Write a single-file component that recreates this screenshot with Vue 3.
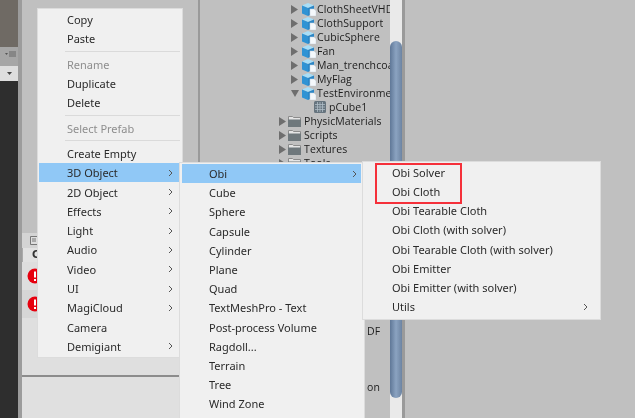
<script setup>
const menu1 = [
  { t: 'Copy' }, { t: 'Paste' }, { sep: true },
  { t: 'Rename', off: true }, { t: 'Duplicate' }, { t: 'Delete' }, { sep: true },
  { t: 'Select Prefab', off: true }, { sep: true },
  { t: 'Create Empty' }, { t: '3D Object', sub: true, on: true }, { t: '2D Object', sub: true },
  { t: 'Effects', sub: true }, { t: 'Light', sub: true }, { t: 'Audio', sub: true },
  { t: 'Video', sub: true }, { t: 'UI', sub: true }, { t: 'MagiCloud', sub: true },
  { t: 'Camera' }, { t: 'Demigiant', sub: true }
]
const menu2 = [
  { t: 'Obi', sub: true, on: true }, { t: 'Cube' }, { t: 'Sphere' }, { t: 'Capsule' }, { t: 'Cylinder' },
  { t: 'Plane' }, { t: 'Quad' }, { t: 'TextMeshPro - Text' }, { t: 'Post-process Volume' },
  { t: 'Ragdoll...' }, { t: 'Terrain' }, { t: 'Tree' }, { t: 'Wind Zone' }
]
const menu3 = [
  { t: 'Obi Solver' }, { t: 'Obi Cloth' }, { t: 'Obi Tearable Cloth' }, { t: 'Obi Cloth (with solver)' },
  { t: 'Obi Tearable Cloth (with solver)' }, { t: 'Obi Emitter' }, { t: 'Obi Emitter (with solver)' },
  { t: 'Utils', sub: true }
]
const models = ['ClothSheetVHDF', 'ClothSupport', 'CubicSphere', 'Fan', 'Man_trenchcoat', 'MyFlag']
const folders = ['PhysicMaterials', 'Scripts', 'Textures', 'Tools']
</script>

<template>
  <div class="root">
    <div class="dock">
      <div class="scene"></div>
      <div class="tools">
        <svg width="12" height="7" viewBox="0 0 12 7"><path d="M0 2h3L1.500 4z" fill="#555"/><path d="M4 1h7M4 3h7M4 5h7" stroke="#666" stroke-width="1"/></svg>
      </div>
      <div class="drop">
        <svg width="5" height="4" viewBox="0 0 5 4"><path d="M0 0h5L2.500 3z" fill="#444"/></svg>
      </div>
      <div class="dark"></div>
    </div>
    <div class="edge"></div>
    <div class="mid">
      <div class="midtop"></div>
      <div class="console">
        <div class="tab">
          <svg width="8" height="9" viewBox="0 0 8 9"><path d="M.5.5h7v8h-7zM2 3h4M2 5h4" fill="#ddd" stroke="#777"/></svg>
        </div>
        <div class="bar">Clear</div>
        <div class="log">
          <svg width="16" height="16" viewBox="0 0 16 16"><circle cx="8" cy="8" r="7.500" fill="#e6000f"/><path d="M8 3.500v6M8 11v2" stroke="#fff" stroke-width="2"/></svg>
        </div>
        <div class="log alt">
          <svg width="16" height="16" viewBox="0 0 16 16"><circle cx="8" cy="8" r="7.500" fill="#e6000f"/><path d="M8 3.500v6M8 11v2" stroke="#fff" stroke-width="2"/></svg>
        </div>
        <div class="rest"></div>
        <div class="lower"></div>
      </div>
    </div>
    <div class="divider"></div>
    <div class="tree">
      <div v-for="m in models" :key="m" class="row model">
        <svg class="arrow" width="7" height="9" viewBox="0 0 7 9"><path d="M0 0l7 4.500L0 9z"/></svg>
        <svg class="ico" width="14" height="14" viewBox="0 0 14 14"><path d="M0 3.500L6 1l6 2.500-6 2.500z" fill="#a8def7"/><path d="M0 3.500l6 2.500v8l-6-2.500z" fill="#2f93d4"/><path d="M12 3.500L6 6v8l2-1V7.500h4z" fill="#2b86c6"/><path d="M8 7h4l2 2v5H8z" fill="#f4f8fb" stroke="#c4d3dd" stroke-width=".5"/></svg>
        <span>{{ m }}</span>
      </div>
      <div class="row model">
        <svg class="arrow" width="8" height="7" viewBox="0 0 8 7"><path d="M0 0h8L4 7z"/></svg>
        <svg class="ico" width="14" height="14" viewBox="0 0 14 14"><path d="M0 3.500L6 1l6 2.500-6 2.500z" fill="#a8def7"/><path d="M0 3.500l6 2.500v8l-6-2.500z" fill="#2f93d4"/><path d="M12 3.500L6 6v8l2-1V7.500h4z" fill="#2b86c6"/><path d="M8 7h4l2 2v5H8z" fill="#f4f8fb" stroke="#c4d3dd" stroke-width=".5"/></svg>
        <span>TestEnvironment</span>
      </div>
      <div class="row mesh">
        <svg class="ico" width="12" height="12" viewBox="0 0 12 12"><rect width="12" height="12" rx="1.500" fill="#66747e"/><path d="M3.500 1v10M6 1v10M8.500 1v10M1 3.500h10M1 6h10M1 8.500h10" stroke="#aebcc6" stroke-width=".8"/></svg>
        <span>pCube1</span>
      </div>
      <div v-for="f in folders" :key="f" class="row folder">
        <svg class="arrow" width="7" height="9" viewBox="0 0 7 9"><path d="M0 0l7 4.500L0 9z"/></svg>
        <svg class="ico" width="13" height="12" viewBox="0 0 13 12"><path d="M.5 1.500h4l1 1h7v9H.5z" fill="#e4e4e4" stroke="#8c8c8c"/><path d="M0 4.500h13V12H0z" fill="#6f787c"/></svg>
        <span>{{ f }}</span>
      </div>
      <div class="row far first"><span>DF</span></div>
      <div class="row far second"><span>on</span></div>
    </div>
    <div class="scroll"><div class="thumb"></div></div>
    <div class="strip"></div>
    <div class="right"></div>

    <div class="menu m1">
      <template v-for="(i, n) in menu1" :key="n">
        <div v-if="i.sep" class="sep"></div>
        <div v-else class="item" :class="{ off: i.off, on: i.on }">
          <span>{{ i.t }}</span>
          <svg v-if="i.sub" width="5" height="8" viewBox="0 0 5 8"><path d="M1 1l3 3-3 3" fill="none" stroke="#555" stroke-width="1"/></svg>
        </div>
      </template>
    </div>
    <div class="menu m2">
      <div v-for="i in menu2" :key="i.t" class="item" :class="{ on: i.on }">
        <span>{{ i.t }}</span>
        <svg v-if="i.sub" width="5" height="8" viewBox="0 0 5 8"><path d="M1 1l3 3-3 3" fill="none" stroke="#555" stroke-width="1"/></svg>
      </div>
    </div>
    <div class="menu m3">
      <div v-for="i in menu3" :key="i.t" class="item">
        <span>{{ i.t }}</span>
        <svg v-if="i.sub" width="5" height="8" viewBox="0 0 5 8"><path d="M1 1l3 3-3 3" fill="none" stroke="#555" stroke-width="1"/></svg>
      </div>
    </div>
    <div class="mark"></div>
  </div>
</template>

<style scoped>
.root {
  position: relative;
  display: flex;
  width: 635px;
  height: 418px;
  overflow: hidden;
  background: #c0c0c0;
  font-family: "Noto Sans", sans-serif;
  filter: blur(0.4px);
}
.dock { width: 18px; display: flex; flex-direction: column; }
.scene { height: 47px; background: #6f6a64; }
.tools { height: 19px; background: #a6a6a6; display: flex; align-items: center; justify-content: flex-end; padding-right: 1px; box-sizing: border-box; padding-bottom: 4px; }
.drop { height: 15px; background: #dedede; display: flex; align-items: center; justify-content: center; }
.dark { flex: 1; background: #2e2e2e; }
.edge { width: 4px; background: #9c9c9c; }
.mid { width: 176px; display: flex; flex-direction: column; }
.midtop { height: 233px; background: #c0c0c0; }
.console { flex: 1; display: flex; flex-direction: column; background: #dfdfdf; }
.tab { height: 15px; background: #d4d4d4; padding: 3px 0 0 8px; box-sizing: border-box; }
.tab svg { display: block; }
.bar { height: 14px; padding-left: 9px; background: #e2e2e2; font: 700 10px/14px "DejaVu Sans", sans-serif; color: #333; border-left: 1px solid #aaa; }
.log { height: 28px; display: flex; align-items: center; padding-left: 5px; background: #dedede; }
.alt { background: #d6d6d6; }
.rest { height: 57px; }
.lower { flex: 1; border-top: 2px solid #8c8c8c; background: #e0e0e0; }
.divider { width: 2px; background: #9a9a9a; }
.tree { width: 190px; padding-top: 2px; box-sizing: border-box; overflow: hidden; background: #c0c0c0; }
.row { display: flex; align-items: center; height: 14px; font: 10.5px/14px "Open Sans", sans-serif; letter-spacing: 0.1px; color: #1c1c1c; white-space: nowrap; }
.row svg { flex: none; }
.arrow { fill: #6e6e6e; }
.model { padding-left: 91px; }
.model .arrow { margin-right: 4px; }
.model svg[width="8"] { margin-right: 3px; }
.model span { margin-left: 1px; }
.mesh { padding-left: 114px; }
.mesh span { margin-left: 3px; }
.folder { padding-left: 79px; }
.folder .arrow { margin-right: 2px; }
.folder span { margin-left: 3px; }
.far { padding-left: 167px; }
.first { margin-top: 154px; }
.second { margin-top: 42px; }
.scroll { width: 12px; background: #eaeaea; padding-top: 41px; box-sizing: border-box; }
.thumb { height: 357px; border-radius: 6px; background: linear-gradient(90deg, #5f7797, #8ba3c1 50%, #6d84a2); }
.strip { width: 3px; background: #9a9a9a; }
.right { flex: 1; background: #c0c0c0; }
.menu {
  position: absolute;
  box-sizing: border-box;
  background: #f0f0f0;
  border: 1px solid #dcdcdc;
  color: #2a2a2a;
  font-size: 11px;
}
.m1 { left: 37px; top: 8px; width: 146px; height: 350px; padding: 1px 2px 0 1px; }
.m2 { left: 179px; top: 162px; width: 186px; height: 262px; padding: 1px 3px 1px 2px; }
.m3 { left: 362px; top: 161px; width: 239px; height: 159px; padding: 1px 3px; }
.item { display: flex; align-items: center; justify-content: space-between; height: 19.3px; padding: 0 7px 0 28px; }
.m2 .item { height: 19.2px; padding-left: 27px; padding-right: 4px; }
.m3 .item { height: 19.15px; padding-left: 26px; padding-right: 9px; }
.item.on { background: #90c8f6; }
.item.off { color: #8e8e8e; }
.sep { height: 1px; margin: 2.500px 0 2.500px 26px; background: #dadada; }
.mark {
  position: absolute;
  left: 375px;
  top: 163px;
  width: 87px;
  height: 41px;
  box-sizing: border-box;
  border: 2.500px solid #f5303a;
}
</style>

<style>
html, body { margin: 0; background: #c0c0c0; }
</style>
